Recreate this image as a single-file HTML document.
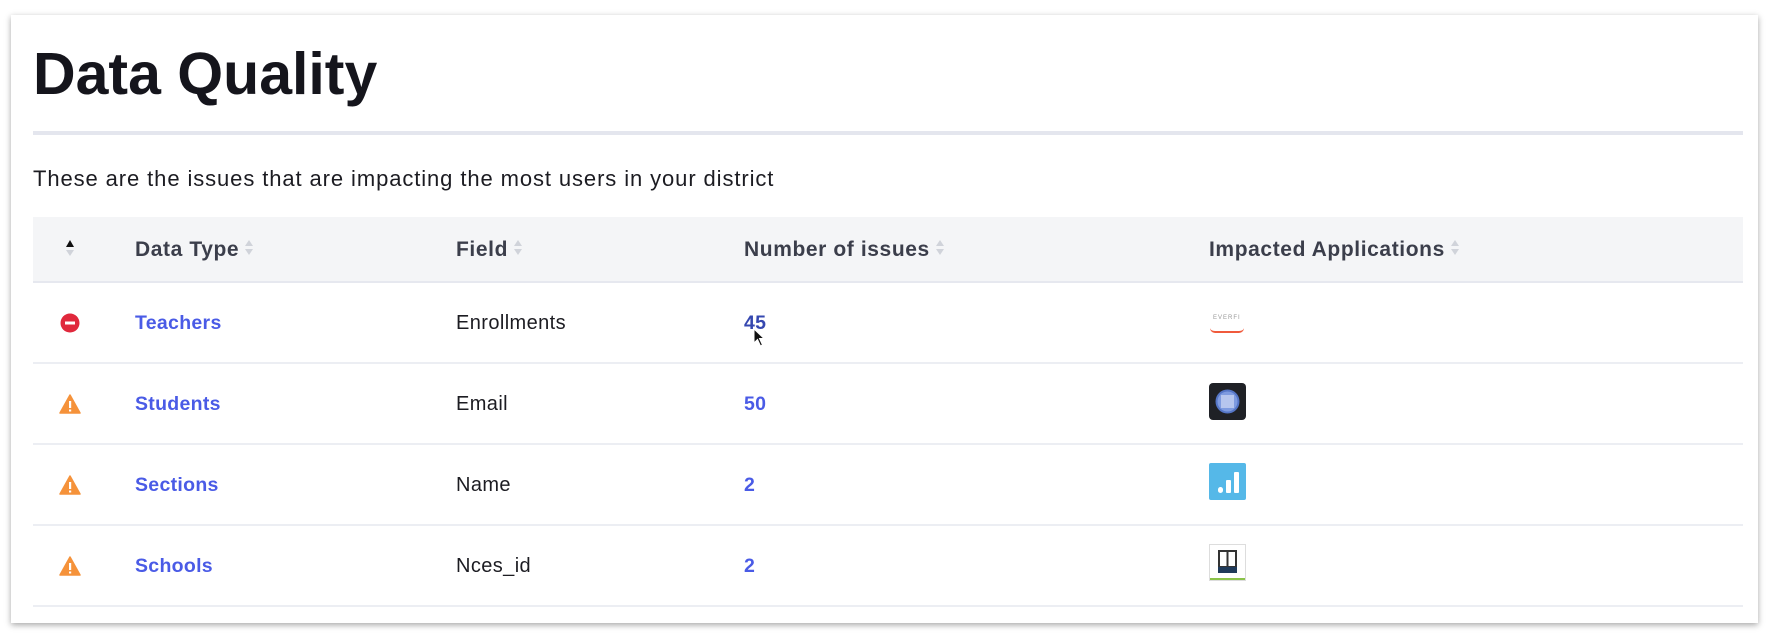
<!DOCTYPE html>
<html><head><meta charset="utf-8"><style>
body{margin:0;width:1772px;height:640px;background:#fff;font-family:"Liberation Sans",sans-serif;position:relative;overflow:hidden}
.card{position:absolute;left:11px;top:15px;width:1747px;height:608px;background:#fff;box-shadow:0 2px 6px rgba(0,0,0,.35)}
.a{position:absolute;white-space:nowrap}
h1{position:absolute;left:33px;top:40px;margin:0;font-size:59px;font-weight:bold;color:#15151c;letter-spacing:0px}
.div{position:absolute;left:33px;top:131px;width:1710px;height:4px;background:#e4e6ee}
.sub{left:33px;top:166px;font-size:22px;letter-spacing:0.9px;color:#1c1c22}
.hdr{position:absolute;left:33px;top:217px;width:1710px;height:64px;background:#f4f5f7;border-bottom:2px solid #e6e8ef}
.ht{font-size:21px;font-weight:bold;color:#3b3e4b;top:238px;letter-spacing:0.6px}
.sort{display:inline-block;vertical-align:middle;margin-left:6px;width:8px;height:16px;position:relative;top:-2px}
.sort:before{content:"";position:absolute;left:0;top:0;border:4px solid transparent;border-bottom:6px solid #d0d3da;border-top:0}
.sort:after{content:"";position:absolute;left:0;top:9px;border:4px solid transparent;border-top:6px solid #d0d3da;border-bottom:0}
.line{position:absolute;left:33px;width:1710px;height:2px;background:#eceef3}
.cell{font-size:20px;color:#1c1c22;letter-spacing:0.4px}
.lnk{font-size:19.5px;font-weight:bold;color:#4a5be6;letter-spacing:0.3px}
</style></head><body>
<div class="card"></div>
<h1>Data Quality</h1>
<div class="div"></div>
<div class="a sub">These are the issues that are impacting the most users in your district</div>
<div class="hdr"></div>
<div class="a" style="left:66px;top:240px;width:0;height:0;border:4px solid transparent;border-bottom:7px solid #111;border-top:0"></div>
<div class="a" style="left:66px;top:250px;width:0;height:0;border:4px solid transparent;border-top:6px solid #d0d3da;border-bottom:0"></div>
<div class="a ht" style="left:135px">Data Type<span class="sort"></span></div>
<div class="a ht" style="left:456px">Field<span class="sort"></span></div>
<div class="a ht" style="left:744px">Number of issues<span class="sort"></span></div>
<div class="a ht" style="left:1209px">Impacted Applications<span class="sort"></span></div>

<div class="line" style="top:362px"></div>
<div class="line" style="top:443px"></div>
<div class="line" style="top:524px"></div>
<div class="line" style="top:605px"></div>

<!-- row 1 -->
<svg class="a" style="left:60px;top:313px" width="20" height="20"><circle cx="10" cy="10" r="9.5" fill="#e0283c"/><rect x="5" y="8.5" width="10" height="3" fill="#fff"/></svg>
<div class="a lnk" style="left:135px;top:312px">Teachers</div>
<div class="a cell" style="left:456px;top:312px">Enrollments</div>
<div class="a lnk" style="left:744px;top:312px;color:#3648b0">45</div>
<svg class="a" style="left:753px;top:328px" width="14" height="20"><path d="M1 1 L1 15 L4.5 11.5 L7.5 18 L9.5 17 L6.5 10.5 L11 10.5 Z" fill="#111" stroke="#fff" stroke-width="1"/></svg>
<div class="a" style="left:1209px;top:305px;width:37px;height:37px">
 <div style="font-size:6px;color:#999;letter-spacing:1px;position:absolute;left:4px;top:10px">EVERFI</div>
 <div style="position:absolute;left:1px;top:23px;width:34px;height:3px;border-bottom:2px solid #f05a3c;border-radius:0 0 6px 6px"></div>
</div>
<!-- row 2 -->
<svg class="a" style="left:59px;top:394px" width="22" height="20"><path d="M11 1 L21 19 L1 19 Z" fill="#f5923a" stroke="#f5923a" stroke-linejoin="round" stroke-width="1.5"/><rect x="10" y="7" width="2.2" height="7" fill="#fff"/><rect x="10" y="15.5" width="2.2" height="2" fill="#fff"/></svg>
<div class="a lnk" style="left:135px;top:393px">Students</div>
<div class="a cell" style="left:456px;top:393px">Email</div>
<div class="a lnk" style="left:744px;top:393px">50</div>
<svg class="a" style="left:1209px;top:383px" width="37" height="37"><rect width="37" height="37" rx="4" fill="#1f2126"/><circle cx="18.5" cy="18.5" r="12" fill="#5576c7"/><circle cx="18.5" cy="18.5" r="10" fill="#7e9be0"/><rect x="12" y="12" width="13" height="13" fill="#b6c6ee"/></svg>
<!-- row 3 -->
<svg class="a" style="left:59px;top:475px" width="22" height="20"><path d="M11 1 L21 19 L1 19 Z" fill="#f5923a" stroke="#f5923a" stroke-linejoin="round" stroke-width="1.5"/><rect x="10" y="7" width="2.2" height="7" fill="#fff"/><rect x="10" y="15.5" width="2.2" height="2" fill="#fff"/></svg>
<div class="a lnk" style="left:135px;top:474px">Sections</div>
<div class="a cell" style="left:456px;top:474px">Name</div>
<div class="a lnk" style="left:744px;top:474px">2</div>
<svg class="a" style="left:1209px;top:463px" width="37" height="37"><rect width="37" height="37" rx="2" fill="#55b8e8"/><rect x="9" y="24" width="5" height="6" rx="2.5" fill="#fff"/><rect x="17" y="17" width="5" height="13" rx="1" fill="#fff"/><rect x="25" y="9" width="5" height="21" rx="1" fill="#fff"/></svg>
<!-- row 4 -->
<svg class="a" style="left:59px;top:556px" width="22" height="20"><path d="M11 1 L21 19 L1 19 Z" fill="#f5923a" stroke="#f5923a" stroke-linejoin="round" stroke-width="1.5"/><rect x="10" y="7" width="2.2" height="7" fill="#fff"/><rect x="10" y="15.5" width="2.2" height="2" fill="#fff"/></svg>
<div class="a lnk" style="left:135px;top:555px">Schools</div>
<div class="a cell" style="left:456px;top:555px">Nces_id</div>
<div class="a lnk" style="left:744px;top:555px">2</div>
<svg class="a" style="left:1209px;top:544px" width="37" height="37"><rect x=".5" y=".5" width="36" height="36" fill="#fff" stroke="#ddd"/><rect x="1" y="34" width="35" height="2" fill="#8bc34a"/><rect x="10" y="7" width="17" height="16" fill="none" stroke="#333" stroke-width="2"/><line x1="18.5" y1="7" x2="18.5" y2="23" stroke="#333" stroke-width="2"/><rect x="9" y="23" width="19" height="6" fill="#1f3a5a"/></svg>
</body></html>
